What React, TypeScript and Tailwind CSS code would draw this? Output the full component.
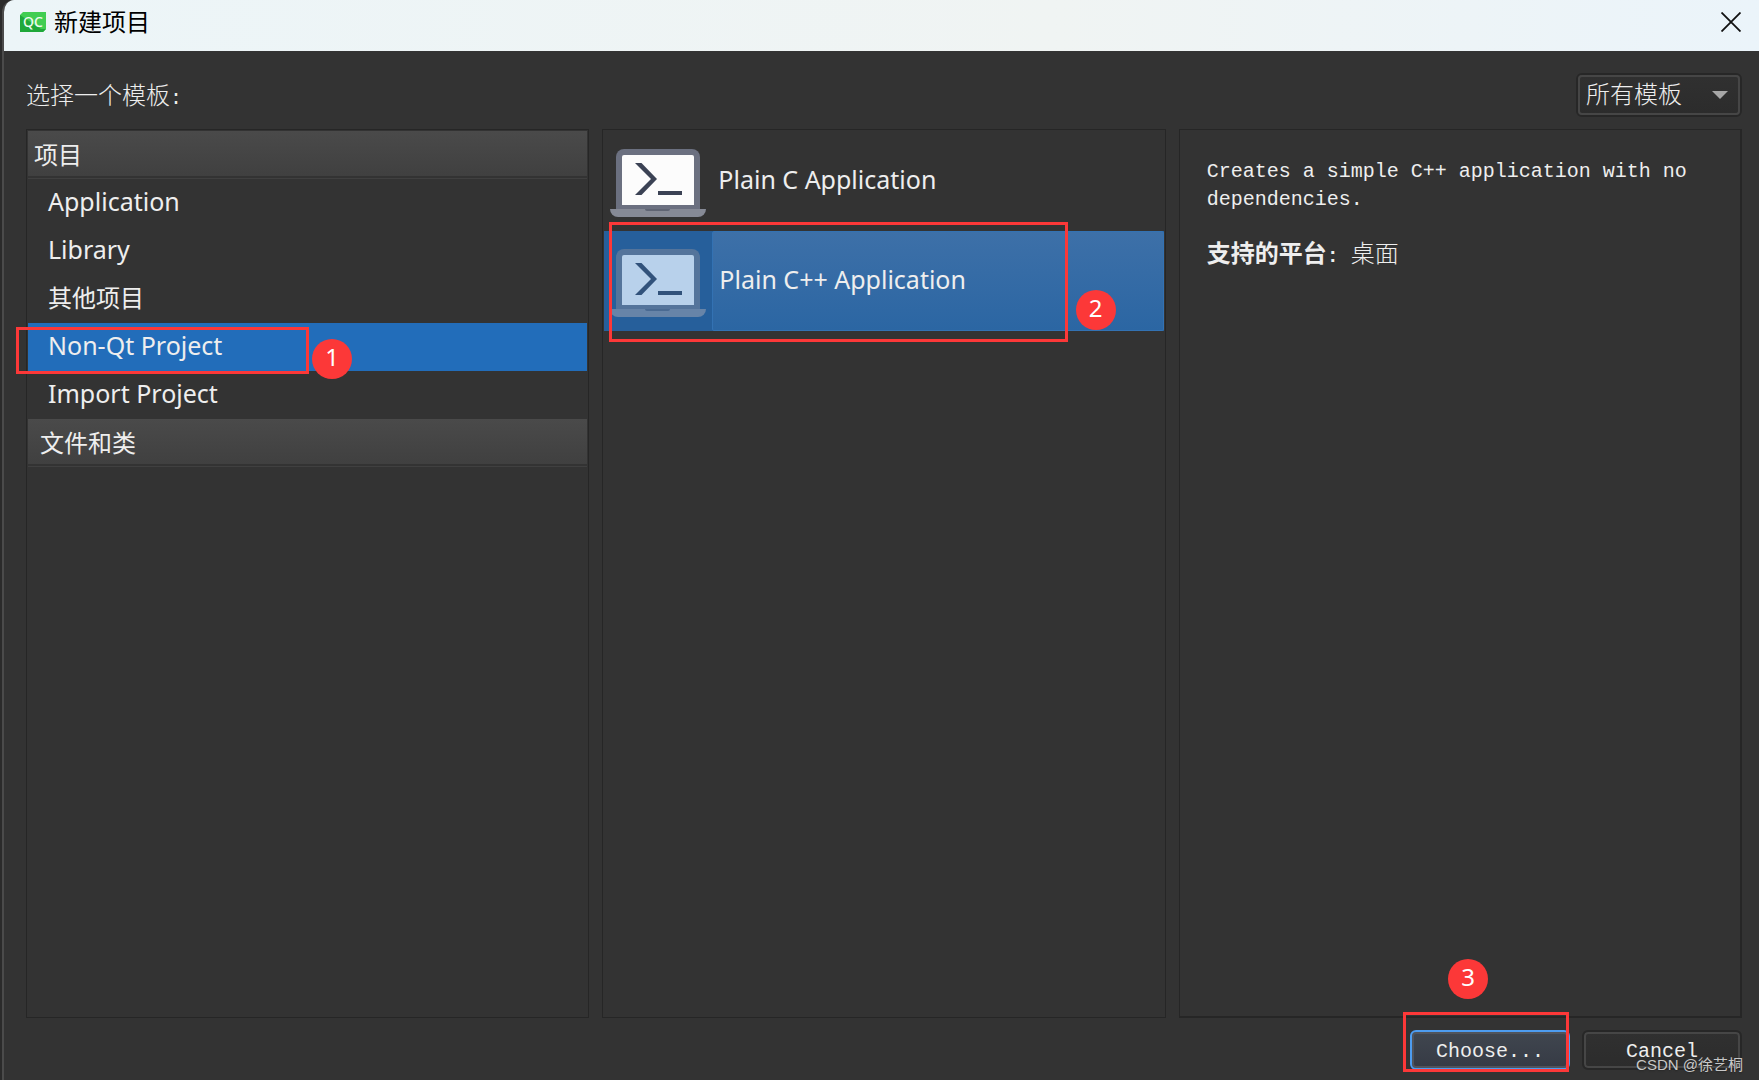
import React from "react";

const UI_FONT = "font-['Noto_Sans','Noto_Sans_CJK_SC',sans-serif]";
const MONO_FONT = "font-['Liberation_Mono','Noto_Sans_CJK_SC',monospace]";

function QtCreatorLogo() {
  return (
    <svg width="26" height="20" viewBox="0 0 26 20" aria-hidden="true">
      <path d="M3 0H26V17L23 20H0V3Z" fill="#41cd52" />
      <path d="M0 3V20H23L26 17H21Z" fill="#1fa83a" />
      <text
        x="13"
        y="15"
        textAnchor="middle"
        fontFamily="'Noto Sans', sans-serif"
        fontSize="14"
        fontWeight="500"
        fill="#eefbf0"
      >
        QC
      </text>
    </svg>
  );
}

function LaptopIcon({ selected = false }: { selected?: boolean }) {
  const c = selected
    ? { body: "#54749b", screen: "#b8d1eb", ink: "#31527b", base: "#6784a8", notch: "#4a6a92" }
    : { body: "#6b7080", screen: "#fcfcfc", ink: "#3b4254", base: "#868a96", notch: "#5f6473" };
  return (
    <svg width="96" height="96" viewBox="0 0 96 96" className="shrink-0" aria-hidden="true">
      <path d="M6 76V24a8 8 0 0 1 8-8H82a8 8 0 0 1 8 8V76Z" fill={c.body} />
      <path d="M12 72V24a2 2 0 0 1 2-2H82a2 2 0 0 1 2 2V72Z" fill={c.screen} />
      <path d="M25 30H31.500L47 46L31.500 62H25L41 46Z" fill={c.ink} />
      <rect x="48" y="58" width="24" height="4" fill={c.ink} />
      <path d="M0 76H96A8 8 0 0 1 88 84H8A8 8 0 0 1 0 76Z" fill={c.base} />
      <path d="M35 76H60A2 2 0 0 1 58 78H37A2 2 0 0 1 35 76Z" fill={c.notch} />
    </svg>
  );
}

function Step({ n, className }: { n: number; className: string }) {
  return (
    <span
      className={`pointer-events-none absolute z-10 flex size-10 items-center justify-center rounded-full bg-[#fc3838] pb-1 text-2xl text-white ${UI_FONT} ${className}`}
    >
      {n}
    </span>
  );
}

function Frame({ className }: { className: string }) {
  return <span className={`pointer-events-none absolute z-10 border-3 border-[#fc3838] ${className}`} />;
}

function GroupHeader({ children, className }: { children: React.ReactNode; className: string }) {
  return (
    <h2 className="flex h-12 flex-col text-2xl">
      <span className={`flex h-[45px] items-center bg-linear-to-b from-[#4a4a4a] to-[#404040] pt-0.5 ${className}`}>
        {children}
      </span>
      <span className="mt-0.5 h-px bg-[#404040]" />
    </h2>
  );
}

function Category({ label, size, selected = false }: { label: string; size: string; selected?: boolean }) {
  return (
    <li className="relative">
      <button
        type="button"
        className={`flex h-12 w-full items-center pb-0.5 pl-5 text-left ${size} ${selected ? "bg-[#226dba]" : ""}`}
      >
        {label}
      </button>
      {selected && (
        <>
          <Frame className="top-1 -left-3 h-[47px] w-[293px]" />
          <Step n={1} className="top-4 left-71" />
        </>
      )}
    </li>
  );
}

export default function App() {
  return (
    <div className={`flex min-h-screen bg-[#2b2b2b] pl-0.5 text-[#eeeeee] ${UI_FONT}`}>
      <div className="relative flex flex-1 flex-col overflow-hidden rounded-tl-xl border-l-2 border-[#4b4b4b] bg-[#333333]">
        <header className="flex h-[51px] items-center justify-between bg-linear-to-r from-[#ecf5f8] via-[#f0f4f3] via-60% to-[#ebf4fa] pr-[18px] pb-2 pl-4 text-black">
          <h1 className="flex items-center gap-2 text-2xl">
            <QtCreatorLogo />
            新建项目
          </h1>
          <button type="button" aria-label="关闭">
            <svg width="20" height="20" viewBox="0 0 20 20" stroke="#111" strokeWidth="1.8" aria-hidden="true">
              <path d="M0.500 0.500L19.500 19.500M19.500 0.500L0.500 19.500" />
            </svg>
          </button>
        </header>

        <main className="flex flex-1 flex-col pt-[22px] pr-[17px] pb-2.5 pl-[22px]">
          <div className={`flex h-11 items-center justify-between ${MONO_FONT}`}>
            <label htmlFor="template-filter" className="pt-1.5 text-2xl font-light">
              选择一个模板<span className="text-xl">:</span>
            </label>
            <div className="relative h-11 w-[166px] rounded-md border-2 border-[#272727]">
              <select
                id="template-filter"
                className="h-full w-full appearance-none rounded-sm border-2 border-[#464646] bg-linear-to-b from-[#303030] to-[#2c2c2c] pt-1 pl-1.5 text-2xl font-light"
              >
                <option>所有模板</option>
              </select>
              <svg
                width="16"
                height="8"
                viewBox="0 0 16 8"
                className="pointer-events-none absolute top-4 right-3"
                aria-hidden="true"
              >
                <path d="M0 0H16L8 8Z" fill="#a6a6a6" />
              </svg>
            </div>
          </div>

          <div className="mt-3 grid flex-1 grid-cols-3 gap-[13px]">
            <nav className="border border-[#262626] p-px">
              <GroupHeader className="pl-1.5">项目</GroupHeader>
              <ul>
                <Category label="Application" size="text-[25px]" />
                <Category label="Library" size="text-[25px]" />
                <Category label="其他项目" size="text-2xl" />
                <Category label="Non-Qt Project" size="text-[25px]" selected />
                <Category label="Import Project" size="text-[25px]" />
              </ul>
              <GroupHeader className="pl-3">文件和类</GroupHeader>
            </nav>

            <ul className="border border-[#262626] p-px">
              <li>
                <button type="button" className="flex h-25 w-full items-center pl-1.5 text-left text-[25px]">
                  <LaptopIcon />
                  <span className="ml-3 pb-0.5">Plain C Application</span>
                </button>
              </li>
              <li className="relative">
                <button type="button" className="flex h-25 w-full items-center bg-[#265f9b] pl-1.5 text-left text-[25px]">
                  <LaptopIcon selected />
                  <span className="ml-1.5 flex h-full flex-1 items-center rounded-xs border border-[#3372b3] bg-linear-to-b from-[#3d70a8] to-[#2b66a3] pb-0.5 pl-1.5">
                    Plain C++ Application
                  </span>
                </button>
                <Frame className="-top-[9px] right-24 left-[5px] h-30" />
                <Step n={2} className="top-[59px] right-12" />
              </li>
            </ul>

            <section className={`border-t border-r-2 border-b-2 border-l border-[#262626] px-[27px] pt-7 text-xl/7 ${MONO_FONT}`}>
              <p>Creates a simple C++ application with no dependencies.</p>
              <p className="mt-7">
                <b className="text-2xl/7">支持的平台</b>
                <b>: </b>
                <span className="text-2xl/7 font-light">桌面</span>
              </p>
            </section>
          </div>

          <footer className={`mt-3 flex justify-end gap-3 text-xl ${MONO_FONT}`}>
            <div className="relative">
              <button
                type="button"
                className="h-10 w-40 rounded-md border-2 border-[#4d9cf0] bg-linear-to-b from-[#40464f] to-[#363b45] pt-1 inset-ring-2 inset-ring-[#50545c]"
              >
                Choose...
              </button>
              <Frame className="-top-[18px] -left-[7px] h-15 w-[166px]" />
              <Step n={3} className="-top-[71px] left-[38px]" />
            </div>
            <button
              type="button"
              className="h-10 w-40 rounded-md border-2 border-[#272727] bg-linear-to-b from-[#303030] to-[#2c2c2c] pt-1 inset-ring-2 inset-ring-[#464646]"
            >
              Cancel
            </button>
          </footer>
        </main>

        <span className="pointer-events-none absolute right-4 bottom-1 font-['Liberation_Sans','Noto_Sans_CJK_SC',sans-serif] text-[15px] text-[#c8c8c8] text-shadow-sm">
          CSDN @徐艺桐
        </span>
      </div>
    </div>
  );
}
